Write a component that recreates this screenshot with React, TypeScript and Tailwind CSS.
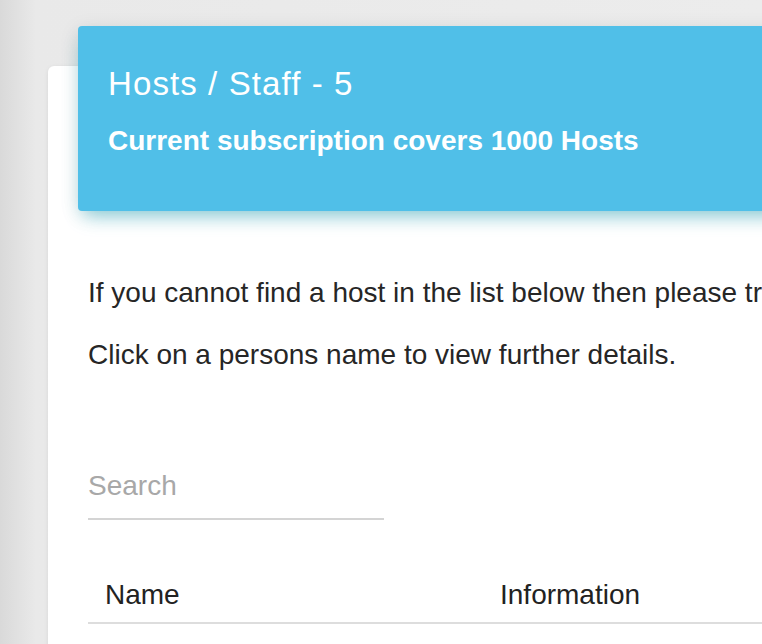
import React from 'react';

// Hosts / Staff listing card with a floating coloured header
export default function App() {
  return (
    <div
      className="w-[762px] h-[644px] overflow-hidden bg-[linear-gradient(to_right,#d9d9d9,#e9e9e9_36px,#ececec)] pt-[66px] pl-[48px]"
      style={{ fontFamily: '"Liberation Sans", Arial, sans-serif' }}
    >
      <div className="flex flex-col w-[1000px] h-[700px] bg-white rounded-tl-[6px] shadow-[0_1px_4px_rgba(0,0,0,0.08)] px-[40px]">
        {/* Card header */}
        <div className="-mt-[40px] mx-[-10px] h-[185px] shrink-0 rounded-[4px] bg-[#50bfe8] px-[30px] pt-[35px] text-white shadow-[0_4px_20px_0_rgba(0,0,0,0.10),0_10px_18px_-6px_rgba(0,170,200,0.45)]">
          <h1 className="text-[33px] leading-[46px] font-light tracking-[1.1px]">
            Hosts / Staff - 5
          </h1>
          <p className="mt-[14px] text-[28px] leading-[39px] font-bold">
            Current subscription covers 1000 Hosts
          </p>
        </div>

        {/* Intro copy */}
        <div className="mt-[62px] text-[28px] leading-[40px] text-[#262626]">
          <p className="whitespace-nowrap">
            If you cannot find a host in the list below then please try refreshing the list.
          </p>
          <p className="mt-[22px]">Click on a persons name to view further details.</p>
        </div>

        {/* Search */}
        <div className="mt-[89px] w-[296px] pt-[2px] pb-[12px] border-b-2 border-[#d4d4d4]">
          <input
            type="text"
            placeholder="Search"
            className="block w-full h-[40px] p-0 text-[28px] leading-[40px] text-[#333] placeholder:text-[#a8a8a8] outline-none bg-transparent"
          />
        </div>

        {/* Table header */}
        <table className="mt-[55px] w-full border-collapse">
          <thead>
            <tr className="border-b-2 border-[#dddddd]">
              <th className="w-[412px] p-0 pl-[17px] pb-[7px] text-left text-[28px] leading-[40px] font-normal text-[#222]">
                Name
              </th>
              <th className="p-0 pb-[7px] text-left text-[28px] leading-[40px] font-normal text-[#222]">
                Information
              </th>
            </tr>
          </thead>
        </table>
      </div>
    </div>
  );
}
